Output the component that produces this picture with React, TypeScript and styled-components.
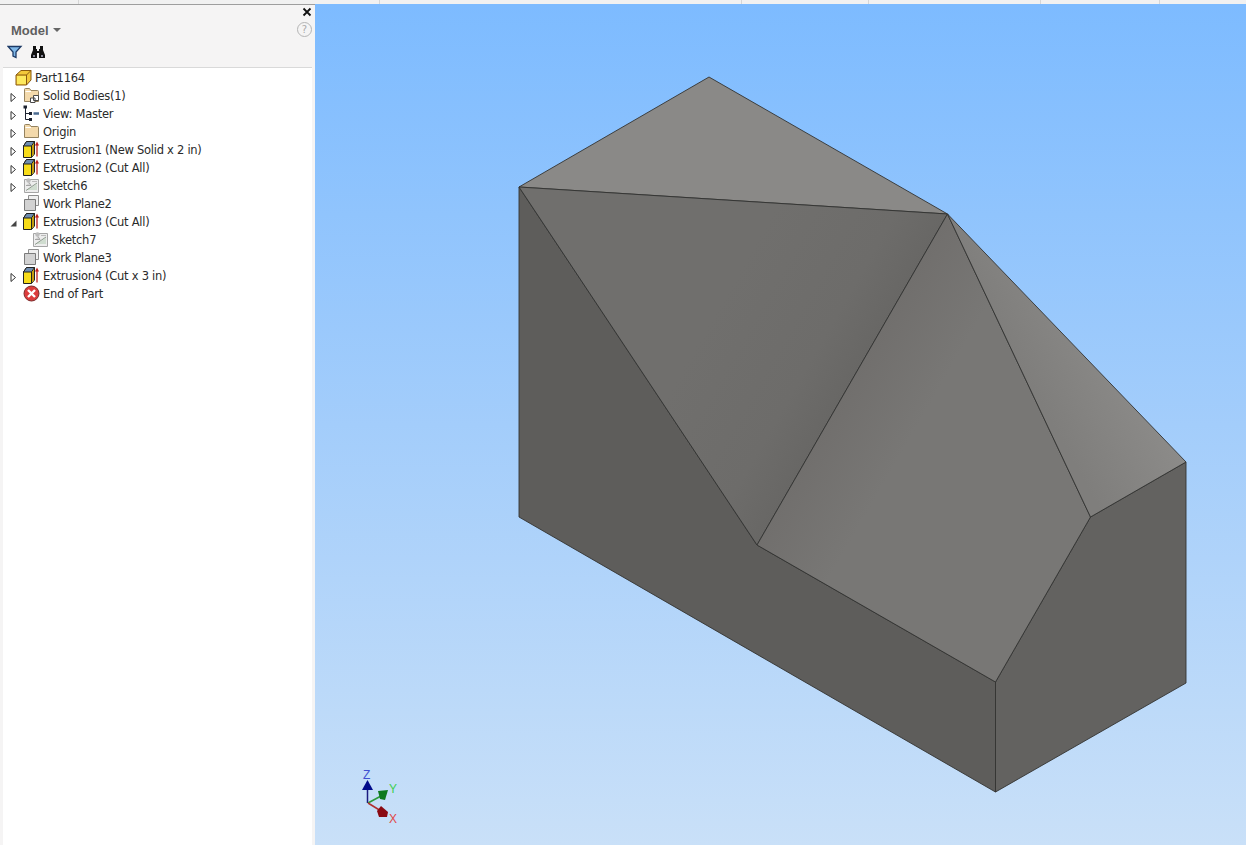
import React from "react";
import styled, { createGlobalStyle } from "styled-components";

const Global = createGlobalStyle`
  html, body { margin: 0; padding: 0; height: 100%; background: #f0f0f0; overflow: hidden; }
  #root { height: 100%; }
`;

const Page = styled.div`
  width: 1246px; height: 845px; display: flex; flex-direction: column;
  font-family: "DejaVu Sans", "Liberation Sans", sans-serif; overflow: hidden;
`;
const TopStrip = styled.div`
  height: 4px; display: flex; flex: none; background: #f1f1f1;
`;
const TopCell = styled.div<{ $w: number }>`
  width: ${p => p.$w}px; flex: none; box-sizing: border-box; border-right: 1px solid #d6d6d6;
`;
const Body = styled.div`
  flex: 1; display: flex; min-height: 0;
`;
const Panel = styled.aside`
  width: 315px; flex: none; box-sizing: border-box; display: flex; flex-direction: column;
  background: #f5f4f4; border-top: 1px solid #9e9e9e; padding-left: 3px; padding-right: 3px;
`;
const PanelHeader = styled.header`
  height: 63px; flex: none; box-sizing: border-box; position: relative;
  border-bottom: 1px solid #d9d9d9; display: flex; flex-direction: column;
`;
const Close = styled.button`
  position: absolute; right: -1px; top: 1px; width: 12px; height: 12px; padding: 0; border: 0; background: none; display: flex;
`;
const Help = styled.span`
  position: absolute; right: 0; top: 17px; width: 15px; height: 15px; box-sizing: border-box; border-radius: 50%;
  border: 1px solid #b4b4b4; color: #aaa; font-size: 10px; line-height: 13px; text-align: center;
`;
const Title = styled.div`
  margin: 16px 0 0 8px; height: 18px; display: flex; align-items: center; gap: 4px;
  font: bold 13px "Liberation Sans", Arial, sans-serif; color: #5f5f5f;
`;
const Caret = styled.span`
  width: 0; height: 0; border-left: 4px solid transparent; border-right: 4px solid transparent; border-top: 4px solid #666;
`;
const Tools = styled.div`
  margin: 6px 0 0 4px; display: flex; gap: 7px; align-items: center;
`;
const Tree = styled.ul`
  flex: 1; margin: 0; padding: 1px 0 0 0; list-style: none; background: #fff;
`;
const Row = styled.li<{ $indent?: number }>`
  height: 18px; display: flex; align-items: center; position: relative;
  padding-left: ${p => p.$indent ?? 20}px;
  font-size: 11.5px; color: #2a2a2a; white-space: nowrap; letter-spacing: -0.27px;
`;
const Twist = styled.svg`
  position: absolute; left: 7px; top: 6px;
`;
const IconBox = styled.span`
  width: 17px; height: 17px; margin: 0 3px 2px 0; flex: none; display: flex;
`;
const Viewport = styled.main`
  flex: 1; min-width: 0; background: linear-gradient(#7dbbff 0%, #a3cdfb 50%, #c9e0f8 100%);
`;
const Model = styled.svg`
  display: block; width: 931px; height: 841px;
`;

const PartIcon = () => (
  <svg width="17" height="17" viewBox="0 0 17 17">
    <path d="M1 6 6 1.500h10v9.500L11.500 16H1z" fill="#f3c83a" stroke="#8a5a10" />
    <path d="M1 6h10.500L16 1.500M11.500 6v10" fill="none" stroke="#8a5a10" />
    <path d="M2 7h9v8H2z" fill="#fde95e" />
  </svg>
);
const FolderIcon = ({ solid }: { solid?: boolean }) => (
  <svg width="17" height="17" viewBox="0 0 17 17">
    <path d="M1.500 14.500V2.500a1 1 0 0 1 1-1h4l1.500 2h6.500a1 1 0 0 1 1 1v10z" fill="#f3d9ab" stroke="#94825f" />
    <path d="M2.500 4.500h5.500" stroke="#fff" />
    {solid && <path d="M10.500 8.500h5v5h-5z M7.500 11h4.500v4.500H7.500z" fill="#fff" stroke="#4a4a4a" strokeWidth="1" />}
  </svg>
);
const ViewIcon = () => (
  <svg width="17" height="17" viewBox="0 0 17 17">
    <path d="M0.500 0.500h3.500v3H0.500z" fill="#1c2230" />
    <path d="M2.500 3v11.500M2.500 8.500H6M2.500 14.500H6" stroke="#1c2230" fill="none" />
    <path d="M6 7h3v3H6zM6 13h3v3H6z" fill="#1c2230" />
    <path d="M10.500 8.500h5.500" stroke="#4a6a90" strokeWidth="2.500" />
  </svg>
);
const ExtrudeIcon = () => (
  <svg width="17" height="17" viewBox="0 0 17 17">
    <path d="M.5 5 3.500 .5h8V13L8.500 16.500H.5z" fill="#f7dc1a" stroke="#222" />
    <path d="M.5 5h8L11.500 .5h-8z" fill="#6f8db0" stroke="#222" />
    <path d="M8.500 5v11.500" stroke="#222" />
    <path d="M9 5.500 11 2.500V12.500L9 15z" fill="#c49b10" />
    <path d="M14 15.500V3" stroke="#c0201c" strokeWidth="1.300" />
    <path d="M14 .5 12 4.500h4z" fill="#c0201c" />
  </svg>
);
const SketchIcon = () => (
  <svg width="17" height="17" viewBox="0 0 17 17">
    <path d="M1.500 2.500h14v13h-14z" fill="#ededed" stroke="#a5a5a5" />
    <path d="M4 13 14 7v6z" fill="#cfdccf" />
    <path d="M3 13.500 14 6" stroke="#8d9a8d" />
    <circle cx="5.500" cy="3.500" r="2.200" fill="#bdbdbd" />
    <path d="M3 8.500h5l-2-3" fill="#d4d4d4" stroke="#a5a5a5" />
    <path d="M9 4.500h5" stroke="#bbb" />
  </svg>
);
const PlaneIcon = () => (
  <svg width="17" height="17" viewBox="0 0 17 17">
    <path d="M5.500 .5h10v10h-10z" fill="#efefef" stroke="#8e8e8e" />
    <path d="M1.500 4.500h11v11h-11z" fill="#d2d2d2" stroke="#7b7b7b" />
  </svg>
);
const EndIcon = () => (
  <svg width="17" height="17" viewBox="0 0 17 17">
    <circle cx="8.500" cy="8.500" r="7.500" fill="#dc3c3c" stroke="#7a2a2a" />
    <path d="M5 5 12 12M12 5 5 12" stroke="#fff" strokeWidth="2.400" />
  </svg>
);

const Closed = () => (
  <Twist width="7" height="9" viewBox="0 0 7 9"><path d="M1 .5 5.500 4.500 1 8.500z" fill="#fff" stroke="#333" /></Twist>
);
const Open = () => (
  <Twist width="7" height="9" viewBox="0 0 7 9"><path d="M6.500 1.500V7.500H.500z" fill="#444" /></Twist>
);

type Item = { label: string; icon: React.ReactNode; twist?: "open" | "closed"; indent?: number };
const items: Item[] = [
  { label: "Part1164", icon: <PartIcon />, indent: 12 },
  { label: "Solid Bodies(1)", icon: <FolderIcon solid />, twist: "closed" },
  { label: "View: Master", icon: <ViewIcon />, twist: "closed" },
  { label: "Origin", icon: <FolderIcon />, twist: "closed" },
  { label: "Extrusion1 (New Solid x 2 in)", icon: <ExtrudeIcon />, twist: "closed" },
  { label: "Extrusion2 (Cut All)", icon: <ExtrudeIcon />, twist: "closed" },
  { label: "Sketch6", icon: <SketchIcon />, twist: "closed" },
  { label: "Work Plane2", icon: <PlaneIcon /> },
  { label: "Extrusion3 (Cut All)", icon: <ExtrudeIcon />, twist: "open" },
  { label: "Sketch7", icon: <SketchIcon />, indent: 29 },
  { label: "Work Plane3", icon: <PlaneIcon /> },
  { label: "Extrusion4 (Cut x 3 in)", icon: <ExtrudeIcon />, twist: "closed" },
  { label: "End of Part", icon: <EndIcon /> },
];

const OX = 315, OY = 4;
type Pt = [number, number];
const P = (pts: Pt[]) => pts.map(([x, y]) => `${x - OX},${y - OY}`).join(" ");
const A: Pt = [519, 187], B: Pt = [709, 77], C: Pt = [947.5, 214], D: Pt = [757, 545], E: Pt = [519, 517],
  F: Pt = [995.5, 682], G: Pt = [995.5, 792], H: Pt = [1186, 683], I: Pt = [1186, 462], J: Pt = [1090.5, 517];

export default function App() {
  return (
    <Page>
      <Global />
      <TopStrip>
        {[79, 301, 362, 127, 172, 119].map((w, i) => <TopCell key={i} $w={w} />)}
      </TopStrip>
      <Body>
        <Panel>
          <PanelHeader>
            <Close aria-label="Close">
              <svg width="12" height="12" viewBox="0 0 12 12"><path d="M2.500 2.500l7 7M9.500 2.500l-7 7" stroke="#111" strokeWidth="1.800" /></svg>
            </Close>
            <Help>?</Help>
            <Title>Model <Caret /></Title>
            <Tools>
              <svg width="16" height="14" viewBox="0 0 16 14"><path d="M1 1.500h13L9 7v5.500L6 11V7z" fill="#7fb8e8" stroke="#1d3a66" strokeWidth="1.300" /></svg>
              <svg width="16" height="14" viewBox="0 0 16 14">
                <path d="M3 1h3v3h1v2h2V4h1V1h3v4l2 5v3h-6V8H7v5H1v-3l2-5z" fill="#111" />
                <path d="M3 10h2v2H3zM11 10h2v2h-2z" fill="#889" />
              </svg>
            </Tools>
          </PanelHeader>
          <Tree>
            {items.map(it => (
              <Row key={it.label} $indent={it.indent}>
                {it.twist === "closed" && <Closed />}
                {it.twist === "open" && <Open />}
                <IconBox>{it.icon}</IconBox>
                {it.label}
              </Row>
            ))}
          </Tree>
        </Panel>
        <Viewport>
          <Model viewBox="0 0 931 841">
            <defs>
              <linearGradient id="center" gradientUnits="userSpaceOnUse" x1={852 - OX} y1={380 - OY} x2={720 - OX} y2={304 - OY}>
                <stop offset="0" stopColor="#686765" />
                <stop offset="0.3" stopColor="#6d6c6a" />
                <stop offset="1" stopColor="#706f6d" />
              </linearGradient>
              <linearGradient id="mid" gradientUnits="userSpaceOnUse" x1={852 - OX} y1={380 - OY} x2={990 - OX} y2={460 - OY}>
                <stop offset="0" stopColor="#716f6d" />
                <stop offset="0.5" stopColor="#787775" />
                <stop offset="1" stopColor="#787775" />
              </linearGradient>
              <linearGradient id="slope" gradientUnits="userSpaceOnUse" x1={1020 - OX} y1={365 - OY} x2={1120 - OX} y2={310 - OY}>
                <stop offset="0" stopColor="#7f7e7c" />
                <stop offset="1" stopColor="#8e8d8b" />
              </linearGradient>
            </defs>
            <g stroke="#333331" strokeWidth="0.9" strokeLinejoin="round">
              <polygon points={P([A, B, C])} fill="#8a8987" />
              <polygon points={P([A, D, F, G, E])} fill="#5e5d5b" />
              <polygon points={P([F, J, I, H, G])} fill="#636260" />
              <polygon points={P([A, C, D])} fill="url(#center)" />
              <polygon points={P([C, J, F, D])} fill="url(#mid)" />
              <polygon points={P([C, I, J])} fill="url(#slope)" />
            </g>
            <g transform={`translate(${-OX} ${-OY})`} fontFamily="'Liberation Sans', sans-serif" fontSize="12">
              <path d="M367.500 803V786" stroke="#1a1a80" strokeWidth="1.500" />
              <path d="M368 803 381 796" stroke="#2a9a3a" strokeWidth="1.500" />
              <path d="M368 803 381 811" stroke="#b03030" strokeWidth="1.500" />
              <path d="M367.500 780 373 790H362z" fill="#000a8a" />
              <path d="M378 791 388 790 385 800 380 799z" fill="#0d7a1e" />
              <path d="M381 806 388 812 387 817H379L377 811z" fill="#8a0a12" />
              <text x="363" y="779" fill="#3f4fd0">Z</text>
              <text x="389" y="793" fill="#3fcf50">Y</text>
              <text x="389" y="823" fill="#e04848">X</text>
            </g>
          </Model>
        </Viewport>
      </Body>
    </Page>
  );
}
